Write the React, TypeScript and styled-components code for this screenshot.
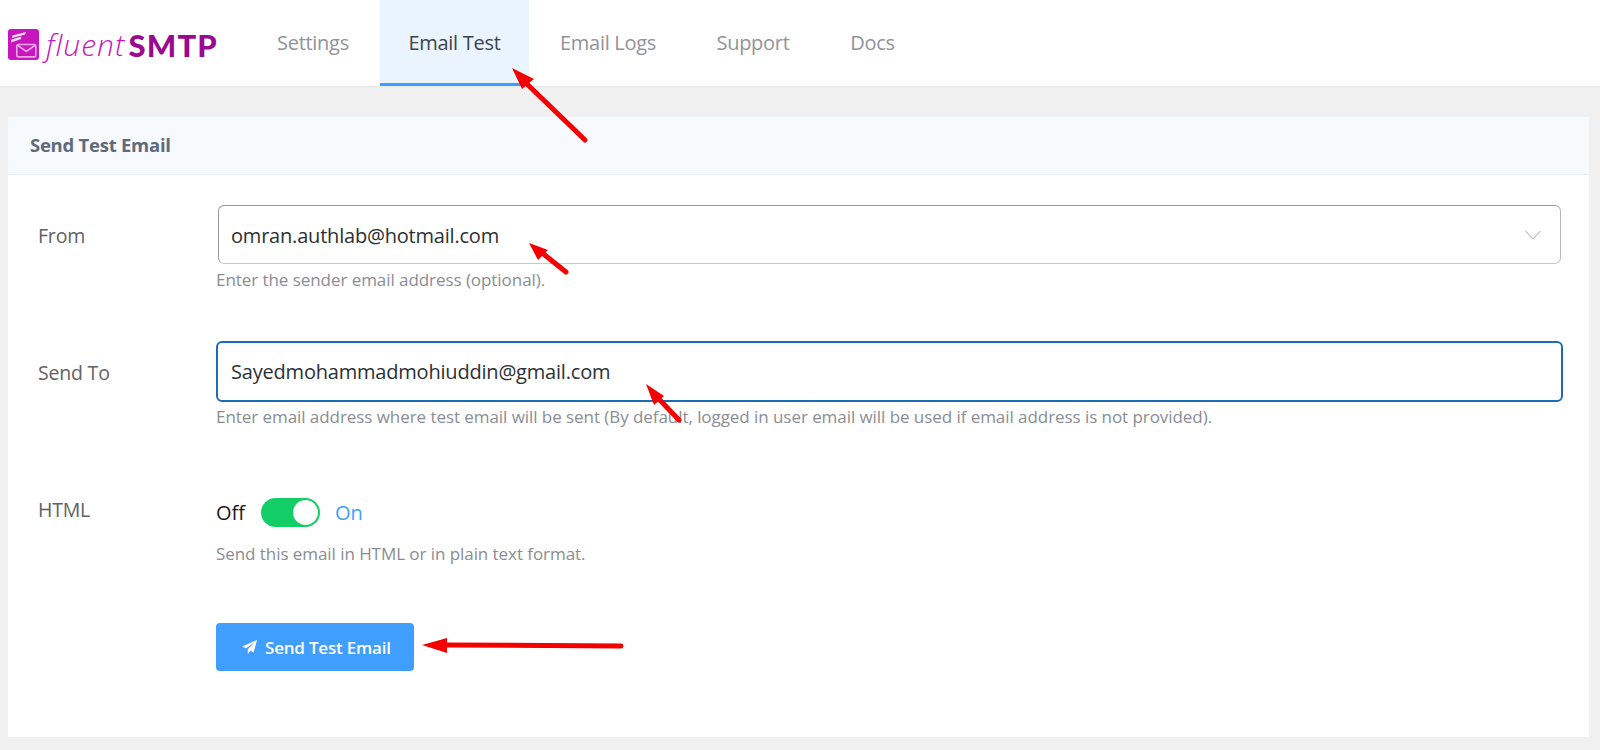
import React from "react";
import styled, { createGlobalStyle } from "styled-components";

const Global = createGlobalStyle`
  html, body { margin: 0; padding: 0; background: #f0f0f1; }
  body { font-family: "Open Sans", "Noto Sans", sans-serif; overflow: hidden; }
  * { box-sizing: border-box; }
`;

const Page = styled.div`
  position: relative;
  width: 100%;
  height: 750px;
  background: #f0f0f1;
  overflow: hidden;
`;

const TopBar = styled.header`
  display: flex;
  align-items: stretch;
  height: 86px;
  background: #fff;
  box-shadow: 0 1px 1px #e8e8e8;
`;

const Brand = styled.div`
  display: flex;
  align-items: center;
  width: 246px;
  padding: 3px 0 0 8px;
`;

const BrandLight = styled.span`
  margin-left: 7px;
  font-family: "Open Sans", sans-serif;
  font-style: italic;
  font-weight: 300;
  font-size: 30px;
  color: #c318bb;
  letter-spacing: 1px;
`;

const BrandBold = styled.span`
  margin-left: 3px;
  font-family: "Lato", sans-serif;
  font-weight: 900;
  font-size: 31px;
  color: #9a0a90;
  letter-spacing: 1.2px;
`;

const Tab = styled.div<{ $active?: boolean; $width: number }>`
  display: flex;
  align-items: center;
  justify-content: center;
  width: ${(p) => p.$width}px;
  padding-top: 2px;
  font-size: 20px;
  letter-spacing: -0.3px;
  color: ${(p) => (p.$active ? "#3c434a" : "#909399")};
  background: ${(p) => (p.$active ? "#e9f4fe" : "transparent")};
  border-bottom: 3px solid ${(p) => (p.$active ? "#409eff" : "transparent")};
`;

const Card = styled.section`
  margin: 31px 11px 0 8px;
  height: 620px;
  background: #fff;
`;

const CardHead = styled.div`
  display: flex;
  align-items: center;
  height: 58px;
  padding: 0 0 2px 22px;
  background: #f6fafd;
  border-bottom: 1px solid #e7eef4;
  font-size: 18.5px;
  font-weight: 700;
  letter-spacing: -0.25px;
  color: #606a7b;
`;

const CardBody = styled.div`
  padding-top: 30px;
`;

const Row = styled.div<{ $gap: number }>`
  display: grid;
  grid-template-columns: 208px 1fr;
  margin-bottom: ${(p) => p.$gap}px;
`;

const Label = styled.div<{ $top: number }>`
  padding: ${(p) => p.$top}px 0 0 30px;
  font-size: 19.5px;
  line-height: 24px;
  letter-spacing: -0.2px;
  color: #606266;
`;

const Field = styled.div<{ $focus?: boolean }>`
  display: flex;
  align-items: center;
  justify-content: space-between;
  height: ${(p) => (p.$focus ? 61 : 59)}px;
  margin: ${(p) => (p.$focus ? "0 26px 0 0" : "0 28px 0 2px")};
  padding: ${(p) => (p.$focus ? "0 13px" : "1px 19px 0 12px")};
  border-radius: 6px;
  border: ${(p) => (p.$focus ? "2px solid #1a6db3" : "1px solid #9a9a9a")};
  ${(p) => (p.$focus ? "" : "border-bottom-color: #c9c9c9; border-right-color: #b8b8b8;")}
  font-size: 20px;
  letter-spacing: -0.2px;
  color: #2c3036;
  background: #fff;
`;

const Help = styled.div<{ $top?: number }>`
  margin-top: ${(p) => p.$top ?? 4}px;
  font-size: 17px;
  line-height: 24px;
  letter-spacing: -0.06px;
  color: #8a8d93;
`;

const Switch = styled.div`
  display: flex;
  align-items: center;
  height: 29px;
  margin-top: 1px;
`;

const SwitchText = styled.span<{ $on?: boolean }>`
  font-size: 20px;
  color: ${(p) => (p.$on ? "#409eff" : "#1a1a1a")};
  margin: ${(p) => (p.$on ? "0 0 0 15px" : "0 16px 0 0")};
`;

const Track = styled.div`
  display: flex;
  justify-content: flex-end;
  align-items: center;
  width: 59px;
  height: 29px;
  padding-right: 2px;
  border-radius: 15px;
  background: #13ce66;
`;

const Knob = styled.div`
  width: 25px;
  height: 25px;
  border-radius: 50%;
  background: #fff;
`;

const SendButton = styled.button`
  display: flex;
  align-items: center;
  justify-content: flex-start;
  gap: 8px;
  width: 198px;
  height: 48px;
  padding: 0 0 0 26px;
  border: none;
  border-radius: 4px;
  background: #409eff;
  color: #fff;
  font-family: inherit;
  font-size: 17px;
  font-weight: 600;
  letter-spacing: -0.2px;
`;

const Arrows = styled.svg`
  position: absolute;
  inset: 0;
  width: 100%;
  height: 100%;
  pointer-events: none;
`;

const Logo = () => (
  <svg width="31" height="31" viewBox="0 0 31 31">
    <rect x="0" y="0" width="31" height="31" rx="3" fill="#c716bd" />
    <path d="M4.5 6.5 L18 3 L17 5.5 L4 9 Z" fill="#f9e3f7" />
    <path d="M3.5 10.5 L13.5 7.5 L13 10 L3 13.5 Z" fill="#f9e3f7" />
    <rect x="8.8" y="15.5" width="19" height="12.4" rx="1.5" fill="none" stroke="#eda6e8" strokeWidth="1.6" />
    <path d="M9.2 16 L18.3 22.5 L27.4 16" fill="none" stroke="#eda6e8" strokeWidth="1.6" />
  </svg>
);

const Chevron = () => (
  <svg width="16" height="10" viewBox="0 0 16 10">
    <path d="M0.5 1 L8 9 L15.5 1" fill="none" stroke="#c0c4cc" strokeWidth="1.1" />
  </svg>
);

const Plane = () => (
  <svg width="15" height="14" viewBox="0 0 15 14">
    <path d="M15 0 L0 6.4 L4 8.3 L12.4 2.6 L5.8 9.2 L5.8 14 L8.4 10.8 L11.6 12.4 Z" fill="#fff" />
  </svg>
);

export default function App() {
  return (
    <Page>
      <Global />
      <TopBar>
        <Brand>
          <Logo />
          <BrandLight>fluent</BrandLight>
          <BrandBold>SMTP</BrandBold>
        </Brand>
        <Tab $width={134}>Settings</Tab>
        <Tab $width={149} $active>Email Test</Tab>
        <Tab $width={158}>Email Logs</Tab>
        <Tab $width={132}>Support</Tab>
        <Tab $width={107}>Docs</Tab>
      </TopBar>
      <Card>
        <CardHead>Send Test Email</CardHead>
        <CardBody>
          <Row $gap={49}>
            <Label $top={19}>From</Label>
            <div>
              <Field>
                omran.authlab@hotmail.com
                <Chevron />
              </Field>
              <Help>Enter the sender email address (optional).</Help>
            </div>
          </Row>
          <Row $gap={68}>
            <Label $top={20}>Send To</Label>
            <div>
              <Field $focus>Sayedmohammadmohiuddin@gmail.com</Field>
              <Help $top={3}>
                Enter email address where test email will be sent (By default, logged in user email will be used if email address is not provided).
              </Help>
            </div>
          </Row>
          <Row $gap={57}>
            <Label $top={1}>HTML</Label>
            <div>
              <Switch>
                <SwitchText>Off</SwitchText>
                <Track>
                  <Knob />
                </Track>
                <SwitchText $on>On</SwitchText>
              </Switch>
              <Help $top={15}>Send this email in HTML or in plain text format.</Help>
            </div>
          </Row>
          <Row $gap={0}>
            <span />
            <SendButton>
              <Plane />
              Send Test Email
            </SendButton>
          </Row>
        </CardBody>
      </Card>
      <Arrows viewBox="0 0 1600 750">
        <g stroke="#f40000" strokeWidth="5" strokeLinecap="round" fill="#f40000">
          <line x1="585" y1="140" x2="527" y2="84" />
          <line x1="566" y1="272" x2="541" y2="252" />
          <line x1="679" y1="420" x2="656" y2="396" />
          <line x1="621" y1="646" x2="445" y2="645" />
        </g>
        <g fill="#f40000">
          <polygon points="512,68 534,79 522,89" />
          <polygon points="529,243 548,250 538,260" />
          <polygon points="646,384 664,396 654,405" />
          <polygon points="422,645 447,638 447,653" />
        </g>
      </Arrows>
    </Page>
  );
}
